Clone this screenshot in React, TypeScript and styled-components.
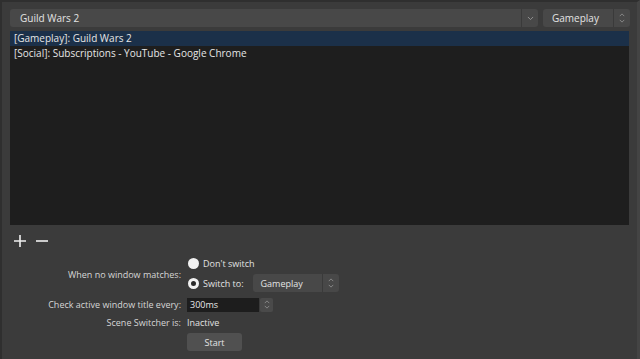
import styled, { createGlobalStyle } from "styled-components";

const Global = createGlobalStyle`
  html, body {
    margin: 0;
    padding: 0;
    background: #2d2d2d;
  }
  * {
    box-sizing: border-box;
  }
`;

const Window = styled.div`
  width: 640px;
  height: 359px;
  overflow: hidden;
  background: #3b3b3b;
  border-top: 2px solid #2f2f2f;
  border-left: 2px solid #2f2f2f;
  border-right: 3px solid #444444;
  padding: 7px 8px 0 8px;
  font-family: "Open Sans", "Liberation Sans", sans-serif;
  font-size: 10px;
  color: #e2e2e2;
`;

const TopRow = styled.div`
  display: flex;
  gap: 5px;
  height: 18px;
  margin-right: -1px;
`;

const Combo = styled.div<{ $width?: number }>`
  display: flex;
  align-items: stretch;
  height: 18px;
  border-radius: 3px;
  background: #484848;
  ${(p) => (p.$width ? `width: ${p.$width}px; flex: none;` : "flex: 1;")}
`;

const ComboText = styled.div<{ $pad?: number }>`
  flex: 1;
  display: flex;
  align-items: center;
  padding-left: ${(p) => p.$pad ?? 10}px;
  white-space: nowrap;
  color: #e4e4e4;
`;

const ArrowBox = styled.div`
  width: 17px;
  flex: none;
  display: flex;
  flex-direction: column;
  align-items: center;
  justify-content: center;
  border-left: 1px solid #3a3a3a;
  gap: 2px;
`;

const List = styled.div`
  margin-top: 4px;
  height: 194px;
  background: #1e1e1e;
`;

const ListItem = styled.div<{ $selected?: boolean }>`
  height: 15px;
  line-height: 15px;
  padding-left: 4px;
  white-space: nowrap;
  background: ${(p) => (p.$selected ? "#1b3049" : "transparent")};
  color: #e6e6e6;
`;

const ActionRow = styled.div`
  display: flex;
  gap: 8px;
  height: 29px;
  align-items: center;
  padding: 3px 0 0 3px;
`;

const IconButton = styled.div`
  width: 14px;
  height: 14px;
  display: flex;
  align-items: center;
  justify-content: center;
`;

const Form = styled.div`
  display: grid;
  grid-template-columns: 171px auto;
  grid-template-rows: 18px 22px 21px 15px 24px;
  column-gap: 6px;
  align-items: center;
  font-size: 9px;
`;

const Label = styled.div<{ $span?: number }>`
  justify-self: end;
  white-space: nowrap;
  color: #d6d6d6;
  ${(p) => (p.$span ? `grid-row: span ${p.$span};` : "")}
`;

const Field = styled.div`
  display: flex;
  align-items: center;
  gap: 9px;
  white-space: nowrap;
`;

const Radio = styled.label`
  display: flex;
  align-items: center;
  gap: 4px;
  color: #e2e2e2;
`;

const RadioDot = styled.span<{ $checked?: boolean }>`
  width: 11px;
  height: 11px;
  border-radius: 50%;
  margin-left: 1px;
  flex: none;
  background: ${(p) => (p.$checked ? "#2a2a2a" : "#f2f2f2")};
  border: ${(p) => (p.$checked ? "3px solid #f2f2f2" : "none")};
`;

const SpinInput = styled.div`
  display: flex;
  align-items: stretch;
  height: 14px;
  gap: 1px;
`;

const InputText = styled.div`
  width: 72px;
  background: #1d1d1d;
  padding-left: 3px;
  display: flex;
  align-items: center;
  color: #e8e8e8;
`;

const SpinBox = styled.div`
  width: 13px;
  background: #4a4a4a;
  border-radius: 2px;
  display: flex;
  flex-direction: column;
  align-items: center;
  justify-content: center;
  gap: 1px;
`;

const Button = styled.div`
  width: 55px;
  height: 18px;
  border-radius: 3px;
  background: #505050;
  display: flex;
  align-items: center;
  justify-content: center;
  color: #e4e4e4;
`;

const Chevron = ({ up = false, size = 7 }: { up?: boolean; size?: number }) => (
  <svg width={size} height={size / 2 + 1} viewBox="0 0 8 5">
    <path
      d={up ? "M1 4 L4 1 L7 4" : "M1 1 L4 4 L7 1"}
      fill="none"
      stroke="#9a9a9a"
      strokeWidth="1"
    />
  </svg>
);

const Plus = () => (
  <svg width="14" height="14" viewBox="0 0 14 14">
    <path d="M7 1 V13 M1 7 H13" stroke="#f0f0f0" strokeWidth="1.6" />
  </svg>
);

const Minus = () => (
  <svg width="14" height="14" viewBox="0 0 14 14">
    <path d="M1 7 H13" stroke="#f0f0f0" strokeWidth="1.6" />
  </svg>
);

export default function App() {
  return (
    <>
      <Global />
      <Window>
        <TopRow>
          <Combo>
            <ComboText>Guild Wars 2</ComboText>
            <ArrowBox>
              <Chevron />
            </ArrowBox>
          </Combo>
          <Combo $width={87}>
            <ComboText $pad={9}>Gameplay</ComboText>
            <ArrowBox>
              <Chevron up size={6} />
              <Chevron size={6} />
            </ArrowBox>
          </Combo>
        </TopRow>
        <List>
          <ListItem $selected>[Gameplay]: Guild Wars 2</ListItem>
          <ListItem>[Social]: Subscriptions - YouTube - Google Chrome</ListItem>
        </List>
        <ActionRow>
          <IconButton>
            <Plus />
          </IconButton>
          <IconButton>
            <Minus />
          </IconButton>
        </ActionRow>
        <Form>
          <Label $span={2}>When no window matches:</Label>
          <Field>
            <Radio>
              <RadioDot />
              Don't switch
            </Radio>
          </Field>
          <Field>
            <Radio>
              <RadioDot $checked />
              Switch to:
            </Radio>
            <Combo $width={86}>
              <ComboText $pad={8}>Gameplay</ComboText>
              <ArrowBox>
                <Chevron up size={6} />
                <Chevron size={6} />
              </ArrowBox>
            </Combo>
          </Field>
          <Label>Check active window title every:</Label>
          <Field>
            <SpinInput>
              <InputText>300ms</InputText>
              <SpinBox>
                <Chevron up size={6} />
                <Chevron size={6} />
              </SpinBox>
            </SpinInput>
          </Field>
          <Label>Scene Switcher is:</Label>
          <Field>Inactive</Field>
          <div />
          <Field>
            <Button>Start</Button>
          </Field>
        </Form>
      </Window>
    </>
  );
}
